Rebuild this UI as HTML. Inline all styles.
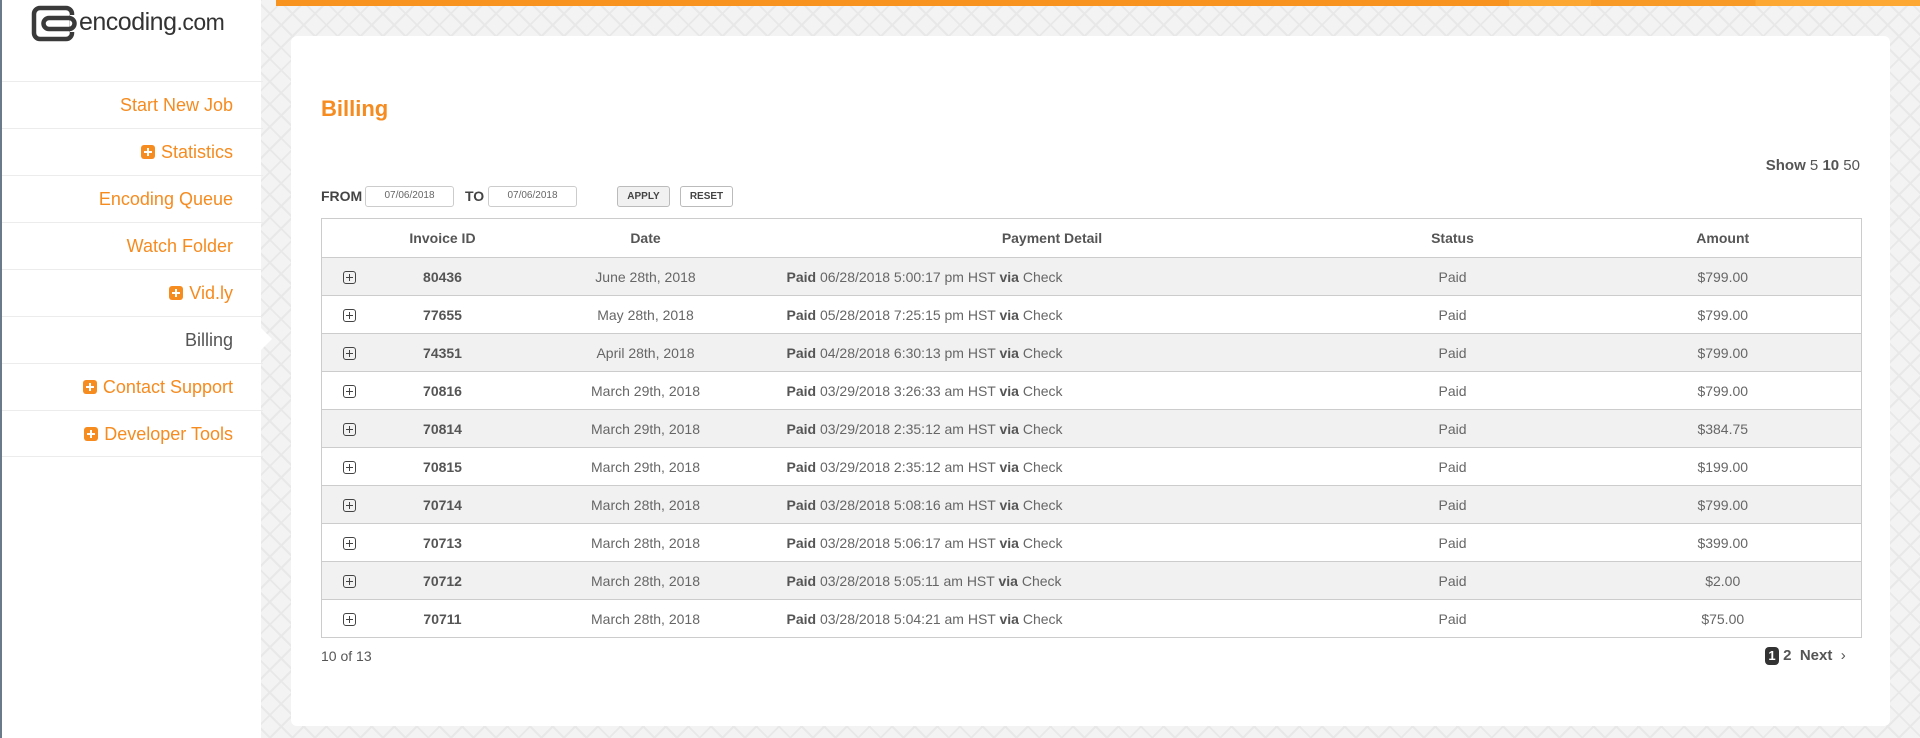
<!DOCTYPE html>
<html><head><meta charset="utf-8"><style>
*{margin:0;padding:0;box-sizing:border-box}
body{width:1920px;height:738px;overflow:hidden;font-family:"Liberation Sans",sans-serif;color:#555;position:relative;
background-color:#f3f3f3;
background-image:repeating-linear-gradient(45deg,transparent 0 14px,#e8e8e8 14px 16px),repeating-linear-gradient(-45deg,transparent 0 14px,#e8e8e8 14px 16px);}
.side{position:absolute;left:0;top:0;width:261px;height:738px;background:#fff;border-left:2px solid #6a7a8a}
.logo{position:absolute;left:29px;top:5px}
.logotext{position:absolute;left:77px;top:8px;font-size:25px;color:#333;letter-spacing:-0.5px}
.nav{position:absolute;left:0;top:81px;width:261px}
.nav div{height:47px;border-top:1px solid #ececec;text-align:right;padding-right:30px;line-height:46px;font-size:18px;color:#f68b1f;position:relative}
.nav div:last-child{border-bottom:1px solid #ececec}
.nav .act{color:#555}
.plus{display:inline-block;width:14px;height:14px;background:#f68b1f;border-radius:3px;position:relative;vertical-align:-1px;margin-right:6px}
.plus:before{content:"";position:absolute;left:3px;top:6px;width:8px;height:2px;background:#fff}
.plus:after{content:"";position:absolute;left:6px;top:3px;width:2px;height:8px;background:#fff}
.tri{position:absolute;left:261px;top:328px;width:0;height:0;border-top:11px solid transparent;border-bottom:11px solid transparent;border-left:11px solid #fff}
.bar{position:absolute;left:276px;top:0;right:0;height:6px;background:linear-gradient(90deg,#f7931e 0 75%,#fba732 75% 80%,#f89a26 80% 90%,#fca832 90%)}
.card{position:absolute;left:291px;top:36px;width:1599px;height:690px;background:#fff;border-radius:6px}
h1{position:absolute;left:321px;top:96px;font-size:22px;color:#f68b1f;font-weight:bold}
.show{position:absolute;right:60px;top:157px;font-size:15px}
.flt{position:absolute;left:321px;top:186px;font-size:14px;font-weight:bold;color:#444}
.in{position:absolute;top:186px;height:21px;border:1px solid #ccc;border-radius:3px;font-size:10px;color:#666;text-align:center;line-height:18px;font-weight:normal}
.btn{position:absolute;top:186px;height:21px;border:1px solid #bbb;border-radius:3px;font-size:10px;font-weight:bold;color:#444;text-align:center;line-height:19px}
table{position:absolute;left:321px;top:218px;width:1540px;border-collapse:collapse;border:1px solid #ccc;font-size:14px;table-layout:fixed}
th{height:39px;font-weight:bold;color:#555;text-align:center}
td{height:38px;border-top:1px solid #ccc;text-align:center;color:#666}
tr:nth-child(even) td{background:#f1f1f1}
td.p{text-align:left;padding-left:3px}
b{color:#555}
.ex{display:inline-block;width:13px;height:13px;border:1px solid #444;border-radius:3px;position:relative;vertical-align:-2px}
.ex:before{content:"";position:absolute;left:2px;top:5px;width:7px;height:1px;background:#444}
.ex:after{content:"";position:absolute;left:5px;top:2px;width:1px;height:7px;background:#444}
.cnt{position:absolute;left:321px;top:648px;font-size:14px}
.pg{position:absolute;left:1765px;top:647px;font-size:15px;font-weight:bold;color:#555}
.one{display:inline-block;width:14px;height:18px;background:#333;color:#fff;border-radius:4px;text-align:center;line-height:18px;font-size:13px}
</style></head><body>
<div class="side">
<svg class="logo" width="46" height="38" viewBox="0 0 46 38"><rect x="3" y="3" width="38" height="31" rx="6" fill="none" stroke="#3a3a3a" stroke-width="4.5"/><path d="M43 13 H18 a5.5 5.5 0 0 0 0 11 H43" fill="none" stroke="#3a3a3a" stroke-width="4.5"/><rect x="39" y="10" width="7" height="17" fill="#fff"/><path d="M38 13 a5.5 5.5 0 0 1 0 11" fill="none" stroke="#3a3a3a" stroke-width="4.5"/></svg>
<div class="logotext">encoding<span style="font-size:23px">.com</span></div>
<div class="nav">
<div>Start New Job</div>
<div><span class="plus"></span>Statistics</div>
<div>Encoding Queue</div>
<div>Watch Folder</div>
<div><span class="plus"></span>Vid.ly</div>
<div class="act">Billing</div>
<div><span class="plus"></span>Contact Support</div>
<div><span class="plus"></span>Developer Tools</div>
</div>
</div>
<div class="tri"></div>
<div class="bar"></div>
<div class="card"></div>
<h1>Billing</h1>
<div class="show"><b>Show</b> 5 <b>10</b> 50</div>
<div class="flt" style="top:188px">FROM</div>
<div class="in" style="left:365px;width:89px">07/06/2018</div>
<div class="flt" style="left:465px;top:188px">TO</div>
<div class="in" style="left:488px;width:89px">07/06/2018</div>
<div class="btn" style="left:617px;width:53px;background:#f1f1f1">APPLY</div>
<div class="btn" style="left:680px;width:53px">RESET</div>
<table>
<colgroup><col style="width:56px"><col style="width:130px"><col style="width:276px"><col style="width:537px"><col style="width:264px"><col style="width:277px"></colgroup>
<tr><th></th><th>Invoice ID</th><th>Date</th><th>Payment Detail</th><th>Status</th><th>Amount</th></tr>
<tr><td><span class="ex"></span></td><td><b>80436</b></td><td>June 28th, 2018</td><td class="p"><b>Paid</b> 06/28/2018 5:00:17 pm HST <b>via</b> Check</td><td>Paid</td><td>$799.00</td></tr>
<tr><td><span class="ex"></span></td><td><b>77655</b></td><td>May 28th, 2018</td><td class="p"><b>Paid</b> 05/28/2018 7:25:15 pm HST <b>via</b> Check</td><td>Paid</td><td>$799.00</td></tr>
<tr><td><span class="ex"></span></td><td><b>74351</b></td><td>April 28th, 2018</td><td class="p"><b>Paid</b> 04/28/2018 6:30:13 pm HST <b>via</b> Check</td><td>Paid</td><td>$799.00</td></tr>
<tr><td><span class="ex"></span></td><td><b>70816</b></td><td>March 29th, 2018</td><td class="p"><b>Paid</b> 03/29/2018 3:26:33 am HST <b>via</b> Check</td><td>Paid</td><td>$799.00</td></tr>
<tr><td><span class="ex"></span></td><td><b>70814</b></td><td>March 29th, 2018</td><td class="p"><b>Paid</b> 03/29/2018 2:35:12 am HST <b>via</b> Check</td><td>Paid</td><td>$384.75</td></tr>
<tr><td><span class="ex"></span></td><td><b>70815</b></td><td>March 29th, 2018</td><td class="p"><b>Paid</b> 03/29/2018 2:35:12 am HST <b>via</b> Check</td><td>Paid</td><td>$199.00</td></tr>
<tr><td><span class="ex"></span></td><td><b>70714</b></td><td>March 28th, 2018</td><td class="p"><b>Paid</b> 03/28/2018 5:08:16 am HST <b>via</b> Check</td><td>Paid</td><td>$799.00</td></tr>
<tr><td><span class="ex"></span></td><td><b>70713</b></td><td>March 28th, 2018</td><td class="p"><b>Paid</b> 03/28/2018 5:06:17 am HST <b>via</b> Check</td><td>Paid</td><td>$399.00</td></tr>
<tr><td><span class="ex"></span></td><td><b>70712</b></td><td>March 28th, 2018</td><td class="p"><b>Paid</b> 03/28/2018 5:05:11 am HST <b>via</b> Check</td><td>Paid</td><td>$2.00</td></tr>
<tr><td><span class="ex"></span></td><td><b>70711</b></td><td>March 28th, 2018</td><td class="p"><b>Paid</b> 03/28/2018 5:04:21 am HST <b>via</b> Check</td><td>Paid</td><td>$75.00</td></tr>
</table>
<div class="cnt">10 of 13</div>
<div class="pg"><span class="one">1</span> 2 &nbsp;Next &nbsp;<span style="font-weight:normal">&rsaquo;</span></div>
</body></html>
